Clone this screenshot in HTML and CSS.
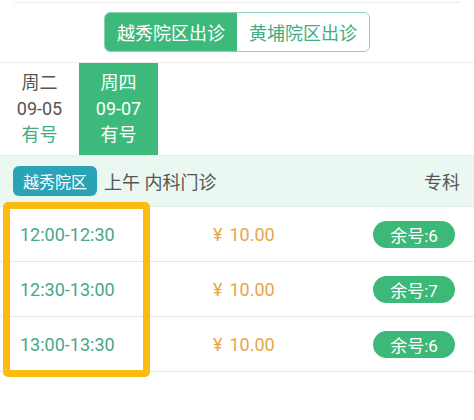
FILE: index.html
```html
<!DOCTYPE html>
<html>
<head>
<meta charset="utf-8">
<link rel="stylesheet" href="styles.css">
</head>
<body>
<div class="page">
  <div class="topline"></div>
  <div class="seg-wrap">
    <div class="seg">
      <div class="seg-item active">越秀院区出诊</div>
      <div class="seg-item">黄埔院区出诊</div>
    </div>
  </div>
  <div class="tabs">
    <div class="tab">
      <div class="tab-week">周二</div>
      <div class="tab-date">09-05</div>
      <div class="tab-status">有号</div>
    </div>
    <div class="tab active">
      <div class="tab-week">周四</div>
      <div class="tab-date">09-07</div>
      <div class="tab-status">有号</div>
    </div>
  </div>
  <div class="head">
    <span class="badge">越秀院区</span>
    <span class="head-title">上午 内科门诊</span>
    <span class="head-type">专科</span>
  </div>
  <div class="list">
    <div class="row">
      <span class="time">12:00-12:30</span>
      <span class="price"><span class="yen">¥</span>10.00</span>
      <span class="left">余号:6</span>
    </div>
    <div class="row">
      <span class="time">12:30-13:00</span>
      <span class="price"><span class="yen">¥</span>10.00</span>
      <span class="left">余号:7</span>
    </div>
    <div class="row">
      <span class="time">13:00-13:30</span>
      <span class="price"><span class="yen">¥</span>10.00</span>
      <span class="left">余号:6</span>
    </div>
    <div class="highlight"></div>
  </div>
</div>
</body>
</html>
```

FILE: styles.css
```css
* { box-sizing: border-box; }
html, body {
  margin: 0;
  padding: 0;
  background: #fff;
  font-family: Roboto, "Noto Sans CJK SC", sans-serif;
}
.page {
  width: 474px;
  height: 420px;
  overflow: hidden;
}
.topline {
  height: 3px;
  margin: 0 14px;
  border-bottom: 1px solid #ececec;
}
.seg-wrap {
  display: flex;
  justify-content: center;
  padding-top: 9px;
  padding-bottom: 10px;
  border-bottom: 1px solid #ececec;
}
.seg {
  display: flex;
  width: 266px;
  height: 40px;
  border: 1px solid #8fd0b6;
  border-radius: 6px;
  overflow: hidden;
}
.seg-item {
  flex: 1;
  display: flex;
  align-items: center;
  justify-content: center;
  font-size: 18px;
  color: #3fae82;
  background: #fff;
}
.seg-item.active {
  background: #3dba7b;
  color: #fff;
}
.tabs {
  display: flex;
  height: 92px;
}
.tab {
  width: 79px;
  display: flex;
  flex-direction: column;
  align-items: center;
  justify-content: center;
  font-size: 18px;
  line-height: 26px;
  color: #555;
}
.tab .tab-status { color: #45ad86; }
.tab.active {
  background: #3dba7b;
  color: #fff;
}
.tab.active .tab-status { color: #fff; }
.head {
  display: flex;
  align-items: center;
  height: 52px;
  padding: 0 14px 0 13px;
  background: #eaf8f1;
  border-top: 1px solid #e3efe9;
  border-bottom: 1px solid #e3ece8;
}
.badge {
  display: inline-flex;
  align-items: center;
  justify-content: center;
  width: 84px;
  height: 30px;
  border-radius: 6px;
  background: #29a3b5;
  color: #fff;
  font-size: 16px;
}
.head-title {
  margin-left: 7px;
  font-size: 18px;
  color: #555;
}
.head-type {
  margin-left: auto;
  font-size: 18px;
  color: #555;
}
.list {
  position: relative;
}
.row {
  display: flex;
  align-items: center;
  height: 55px;
  border-bottom: 1px solid #e6e6e6;
  padding-left: 20px;
  padding-right: 19px;
}
.time {
  width: 193px;
  font-size: 18px;
  color: #4aa789;
}
.price {
  font-size: 18px;
  color: #e6a64a;
}
.yen {
  margin-right: 7px;
}
.left {
  margin-left: auto;
  display: inline-flex;
  align-items: center;
  justify-content: center;
  width: 82px;
  height: 27px;
  border-radius: 14px;
  background: #3cb878;
  color: #fff;
  font-size: 17px;
}
.highlight {
  position: absolute;
  left: 3px;
  top: -5px;
  width: 147px;
  height: 175px;
  border: 7px solid #fdbb10;
  border-radius: 5px;
}
```
